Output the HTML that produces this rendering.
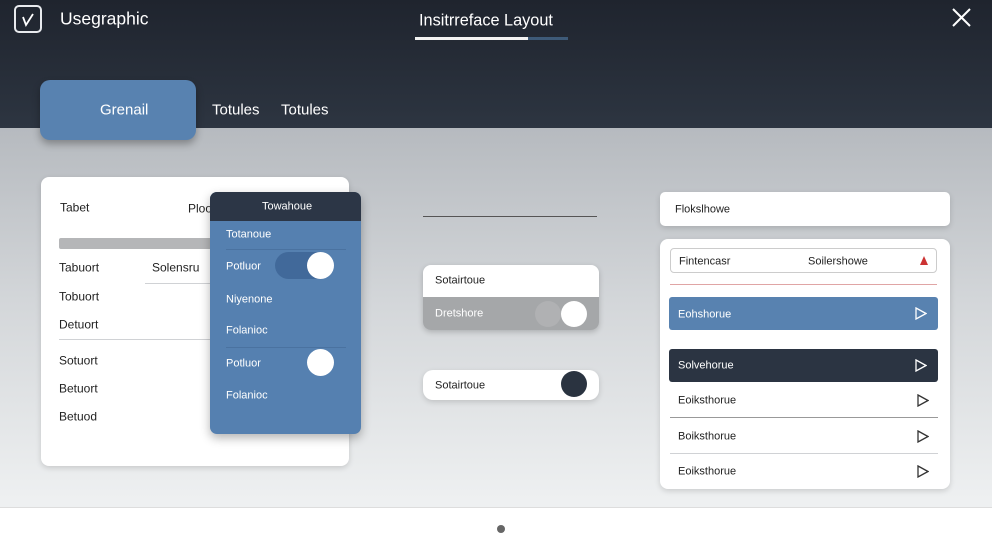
<!DOCTYPE html>
<html><head><meta charset="utf-8"><style>
*{margin:0;padding:0;box-sizing:border-box}
body{width:992px;height:541px;overflow:hidden;position:relative;font-family:"Liberation Sans",sans-serif;background:linear-gradient(#b6babf 128px,#d3d6d9 300px,#eef0f1 500px);}
.a{position:absolute}
.hdr{left:0;top:0;width:992px;height:128px;background:linear-gradient(#1f242e,#2d3541)}
.t{position:absolute;font-size:12px;color:#222;white-space:nowrap;transform:translateY(-45%)}
.w{color:#fff}
.card{background:#fff;border-radius:8px;box-shadow:0 2px 6px rgba(0,0,0,.15)}
.ln{position:absolute;height:1px;background:#d0d2d5}
.knob{position:absolute;border-radius:50%;background:#fff}
.tri{position:absolute;width:12px;height:13px}
</style></head><body>
<div class="a hdr"></div>
<div class="a" style="left:14px;top:5px;width:28px;height:28px;border:2px solid #e8eaee;border-radius:5px"></div>
<svg class="a" style="left:14px;top:5px" width="28" height="28"><path d="M9 12 L12 20 L19 9" stroke="#fff" stroke-width="1.8" fill="none"/></svg>
<div class="t w" style="left:60px;top:18px;font-size:17.5px">Usegraphic</div>
<div class="t w" style="left:419px;top:20px;font-size:16.3px">Insitrreface Layout</div>
<div class="a" style="left:415px;top:37px;width:113px;height:3px;background:#f2f2f2"></div>
<div class="a" style="left:528px;top:37px;width:40px;height:3px;background:#3e5a78"></div>
<svg class="a" style="left:950px;top:7px" width="24" height="22"><path d="M3 2L20 19M20 2L3 19" stroke="#fff" stroke-width="2"/></svg>
<div class="a" style="left:40px;top:80px;width:156px;height:60px;background:#5882b0;border-radius:10px;box-shadow:0 4px 8px rgba(0,0,0,.3)"></div>
<div class="t w" style="left:100px;top:109px;font-size:15px">Grenail</div>
<div class="t w" style="left:212px;top:109px;font-size:15px">Totules</div>
<div class="t w" style="left:281px;top:109px;font-size:15px">Totules</div>

<div class="a card" style="left:41px;top:177px;width:308px;height:289px"></div>
<div class="t" style="left:60px;top:207px">Tabet</div>
<div class="t" style="left:188px;top:208px">Ploo</div>
<div class="a" style="left:59px;top:238px;width:155px;height:11px;background:#b5b6b8;border-radius:2px"></div>
<div class="t" style="left:59px;top:267px">Tabuort</div>
<div class="t" style="left:152px;top:267px">Solensru</div>
<div class="ln" style="left:145px;top:283px;width:70px"></div>
<div class="t" style="left:59px;top:296px">Tobuort</div>
<div class="t" style="left:59px;top:324px">Detuort</div>
<div class="ln" style="left:59px;top:339px;width:155px"></div>
<div class="t" style="left:59px;top:360px">Sotuort</div>
<div class="t" style="left:59px;top:388px">Betuort</div>
<div class="t" style="left:59px;top:416px">Betuod</div>

<div class="a" style="left:210px;top:192px;width:151px;height:242px;background:#5580b0;border-radius:7px;overflow:hidden;box-shadow:0 4px 10px rgba(0,0,0,.3)"><div style="height:29px;background:#2c3646"></div></div>
<div class="t w" style="left:262px;top:206px;font-size:11px">Towahoue</div>
<div class="t w" style="left:226px;top:234px;font-size:11px">Totanoue</div>
<div class="ln" style="left:226px;top:249px;width:120px;background:#4a72a0"></div>
<div class="t w" style="left:226px;top:266px;font-size:11px">Potluor</div>
<div class="a" style="left:275px;top:252px;width:58px;height:27px;background:#41699a;border-radius:14px"></div>
<div class="knob" style="left:307px;top:252px;width:27px;height:27px"></div>
<div class="t w" style="left:226px;top:299px;font-size:11px">Niyenone</div>
<div class="t w" style="left:226px;top:330px;font-size:11px">Folanioc</div>
<div class="ln" style="left:226px;top:347px;width:120px;background:#4a72a0"></div>
<div class="t w" style="left:226px;top:363px;font-size:11px">Potluor</div>
<div class="knob" style="left:307px;top:349px;width:27px;height:27px"></div>
<div class="t w" style="left:226px;top:395px;font-size:11px">Folanioc</div>

<div class="a" style="left:423px;top:216px;width:174px;height:1px;background:#555"></div>
<div class="a" style="left:423px;top:265px;width:176px;height:65px;border-radius:8px;overflow:hidden;box-shadow:0 2px 6px rgba(0,0,0,.2)"><div style="height:32px;background:#fff"></div><div style="height:33px;background:#a5a7a9"></div></div>
<div class="t" style="left:435px;top:280px;font-size:11px">Sotairtoue</div>
<div class="t w" style="left:435px;top:313px;font-size:11px">Dretshore</div>
<div class="knob" style="left:535px;top:301px;width:26px;height:26px;background:#b0b1b3"></div>
<div class="knob" style="left:561px;top:301px;width:26px;height:26px"></div>
<div class="a card" style="left:423px;top:370px;width:176px;height:30px;border-radius:10px"></div>
<div class="t" style="left:435px;top:385px;font-size:11px">Sotairtoue</div>
<div class="knob" style="left:561px;top:371px;width:26px;height:26px;background:#2a3340"></div>

<div class="a card" style="left:660px;top:192px;width:290px;height:34px;border-radius:5px"></div>
<div class="t" style="left:675px;top:209px;font-size:11px">Flokslhowe</div>
<div class="a card" style="left:660px;top:239px;width:290px;height:250px"></div>
<div class="a" style="left:670px;top:248px;width:267px;height:25px;border:1px solid #ccc;border-radius:4px"></div>
<div class="t" style="left:679px;top:261px;font-size:11px">Fintencasr</div>
<div class="t" style="left:808px;top:261px;font-size:11px">Soilershowe</div>
<div class="a" style="left:920px;top:256px;width:0;height:0;border-left:4px solid transparent;border-right:4px solid transparent;border-bottom:9px solid #c33"></div>
<div class="ln" style="left:670px;top:284px;width:267px;background:#e0a5a5"></div>
<div class="a" style="left:669px;top:297px;width:269px;height:33px;background:#5882b0;border-radius:3px"></div>
<div class="t w" style="left:678px;top:314px;font-size:11px">Eohshorue</div>
<div class="a" style="left:669px;top:349px;width:269px;height:33px;background:#2b3442;border-radius:3px"></div>
<div class="t w" style="left:678px;top:365px;font-size:11px">Solvehorue</div>
<div class="t" style="left:678px;top:400px;font-size:11px">Eoiksthorue</div>
<div class="ln" style="left:670px;top:417px;width:268px;background:#999"></div>
<div class="t" style="left:678px;top:436px;font-size:11px">Boiksthorue</div>
<div class="ln" style="left:670px;top:453px;width:268px"></div>
<div class="t" style="left:678px;top:471px;font-size:11px">Eoiksthorue</div>
<svg class="tri" style="left:915px;top:307px"><path d="M1 1L11 6.5L1 12Z" stroke="#fff" fill="none" stroke-width="1.3"/></svg>
<svg class="tri" style="left:915px;top:359px"><path d="M1 1L11 6.5L1 12Z" stroke="#fff" fill="none" stroke-width="1.3"/></svg>
<svg class="tri" style="left:917px;top:394px"><path d="M1 1L11 6.5L1 12Z" stroke="#333" fill="none" stroke-width="1.3"/></svg>
<svg class="tri" style="left:917px;top:430px"><path d="M1 1L11 6.5L1 12Z" stroke="#333" fill="none" stroke-width="1.3"/></svg>
<svg class="tri" style="left:917px;top:465px"><path d="M1 1L11 6.5L1 12Z" stroke="#333" fill="none" stroke-width="1.3"/></svg>

<div class="a" style="left:0;top:507px;width:992px;height:34px;background:#fff;border-top:1px solid #ddd"></div>
<div class="knob" style="left:497px;top:525px;width:8px;height:8px;background:#666"></div>
</body></html>
